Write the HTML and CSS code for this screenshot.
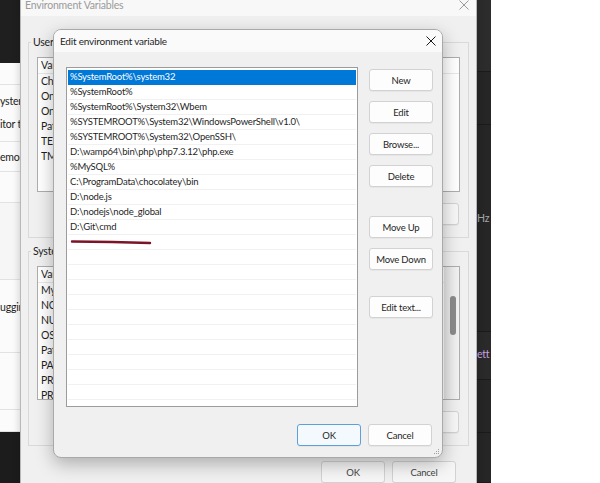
FILE: index.html
```html
<!DOCTYPE html>
<html lang="en">
  <head>
    <meta charset="UTF-8" />
    <title>Edit environment variable</title>
    <link rel="stylesheet" href="styles.css">
  </head>
  <body>
    <div class="desktop">
      <!-- window behind, on the left -->
      <div class="side-window">
        <div class="side-top"></div>
        <div class="side-block side-a"></div>
        <div class="side-block side-b">
          <div class="side-text">ystem</div>
          <div class="side-text side-text-2">itor tools</div>
        </div>
        <div class="side-block side-c"><div class="side-text">emory</div></div>
        <div class="side-block side-d"></div>
        <div class="side-block side-e"></div>
        <div class="side-block side-f"><div class="side-text">ugging</div></div>
        <div class="side-block side-g"></div>
        <div class="side-block side-h"></div>
        <div class="side-bottom"></div>
      </div>

      <!-- dark app strip on the right -->
      <div class="dark-strip">
        <div class="strip-part strip-a"></div>
        <div class="strip-part strip-b"></div>
        <div class="strip-part strip-c"><span class="strip-text">Hz</span></div>
        <div class="strip-part strip-d"><span class="strip-text strip-accent">ett</span></div>
        <div class="strip-part strip-e"></div>
        <div class="strip-part strip-f"></div>
      </div>

      <!-- Environment Variables (inactive) -->
      <div class="env-window">
        <div class="env-title">
          <span>Environment Variables</span>
          <svg class="close-icon" width="10" height="10" viewBox="0 0 10 10">
            <path d="M0.5 0.5 L9.5 9.5 M9.5 0.5 L0.5 9.5" stroke="#9a9a9a" stroke-width="1" fill="none" />
          </svg>
        </div>
        <div class="env-body">
          <fieldset class="group">
            <legend>User variables for user</legend>
            <div class="var-list var-list-user">
              <div class="var-rows">
                <div class="var-row var-head"><span class="var-name">Variable</span><span>Value</span></div>
                <div class="var-row"><span class="var-name">ChocolateyLastPathUpdate</span><span>133214567890</span></div>
                <div class="var-row"><span class="var-name">OneDrive</span><span>C:\Users\user\OneDrive</span></div>
                <div class="var-row"><span class="var-name">OneDriveConsumer</span><span>C:\Users\user\OneDrive</span></div>
                <div class="var-row"><span class="var-name">Path</span><span>C:\Users\user\AppData\Local</span></div>
                <div class="var-row"><span class="var-name">TEMP</span><span>C:\Users\user\AppData\Local\Temp</span></div>
                <div class="var-row"><span class="var-name">TMP</span><span>C:\Users\user\AppData\Local\Temp</span></div>
              </div>
            </div>
            <div class="env-actions">
              <button class="btn btn-env">New...</button>
              <button class="btn btn-env">Edit...</button>
              <button class="btn btn-env">Delete</button>
            </div>
          </fieldset>

          <fieldset class="group group-system">
            <legend>System variables</legend>
            <div class="var-list var-list-system">
              <div class="var-rows">
                <div class="var-row var-head"><span class="var-name">Variable</span><span>Value</span></div>
                <div class="var-row"><span class="var-name">MySQL</span><span>D:\wamp64\bin\mysql\bin</span></div>
                <div class="var-row"><span class="var-name">NODE_PATH</span><span>D:\nodejs\node_global</span></div>
                <div class="var-row"><span class="var-name">NUMBER_OF_PROCESSORS</span><span>8</span></div>
                <div class="var-row"><span class="var-name">OS</span><span>Windows_NT</span></div>
                <div class="var-row"><span class="var-name">Path</span><span>C:\Windows\system32</span></div>
                <div class="var-row"><span class="var-name">PATHEXT</span><span>.COM;.EXE;.BAT;.CMD</span></div>
                <div class="var-row"><span class="var-name">PROCESSOR_ARCHITECTURE</span><span>AMD64</span></div>
                <div class="var-row"><span class="var-name">PROCESSOR_IDENTIFIER</span><span>Intel64 Family 6</span></div>
              </div>
              <div class="scroll-track"><div class="scroll-thumb"></div></div>
            </div>
            <div class="env-actions">
              <button class="btn btn-env">New...</button>
              <button class="btn btn-env">Edit...</button>
              <button class="btn btn-env">Delete</button>
            </div>
          </fieldset>

          <div class="env-footer">
            <button class="btn btn-env-small">OK</button>
            <button class="btn btn-env-small">Cancel</button>
          </div>
        </div>
      </div>

      <!-- Edit environment variable (active dialog) -->
      <div class="edit-dialog">
        <div class="dialog-title">
          <span>Edit environment variable</span>
          <svg class="close-icon" width="10" height="10" viewBox="0 0 10 10">
            <path d="M0.5 0.5 L9.5 9.5 M9.5 0.5 L0.5 9.5" stroke="#1a1a1a" stroke-width="1" fill="none" />
          </svg>
        </div>
        <div class="dialog-body">
          <div class="path-list">
            <div class="path-row selected">%SystemRoot%\system32</div>
            <div class="path-row">%SystemRoot%</div>
            <div class="path-row">%SystemRoot%\System32\Wbem</div>
            <div class="path-row">%SYSTEMROOT%\System32\WindowsPowerShell\v1.0\</div>
            <div class="path-row">%SYSTEMROOT%\System32\OpenSSH\</div>
            <div class="path-row">D:\wamp64\bin\php\php7.3.12\php.exe</div>
            <div class="path-row">%MySQL%</div>
            <div class="path-row">C:\ProgramData\chocolatey\bin</div>
            <div class="path-row">D:\node.js</div>
            <div class="path-row">D:\nodejs\node_global</div>
            <div class="path-row">D:\Git\cmd</div>
            <div class="path-row"></div>
            <div class="path-row"></div>
            <div class="path-row"></div>
            <div class="path-row"></div>
            <div class="path-row"></div>
            <div class="path-row"></div>
            <div class="path-row"></div>
            <div class="path-row"></div>
            <div class="path-row"></div>
            <div class="path-row"></div>
            <div class="path-row"></div>
            <div class="path-row"></div>
          </div>
          <div class="dialog-buttons">
            <button class="btn">New</button>
            <button class="btn">Edit</button>
            <button class="btn">Browse...</button>
            <button class="btn">Delete</button>
            <button class="btn btn-gap-lg">Move Up</button>
            <button class="btn">Move Down</button>
            <button class="btn btn-gap">Edit text...</button>
          </div>
        </div>
        <div class="dialog-footer">
          <button class="btn btn-default">OK</button>
          <button class="btn">Cancel</button>
        </div>
        <svg class="grip" width="6" height="6" viewBox="0 0 6 6">
          <rect x="4" y="0" width="1" height="1" fill="#a0a0a0" />
          <rect x="2" y="2" width="1" height="1" fill="#a0a0a0" />
          <rect x="4" y="2" width="1" height="1" fill="#a0a0a0" />
          <rect x="0" y="4" width="1" height="1" fill="#a0a0a0" />
          <rect x="2" y="4" width="1" height="1" fill="#a0a0a0" />
          <rect x="4" y="4" width="1" height="1" fill="#a0a0a0" />
        </svg>
      </div>

      <!-- hand-drawn red underline -->
      <svg class="annotation" width="600" height="483" viewBox="0 0 600 483">
        <path d="M72 241.5 L112 242 L150 243" stroke="#7c1427" stroke-width="2.4" stroke-linecap="round" fill="none" />
      </svg>
    </div>
  </body>
</html>
```

FILE: styles.css
```css
body {
  margin: 0;
  width: 600px;
  height: 483px;
  overflow: hidden;
  background-color: #ffffff;
  font-family: Lato, "Noto Sans", sans-serif;
  font-size: 9.5px;
  letter-spacing: -0.2px;
  color: #1f1f1f;
}
.desktop {
  position: relative;
  width: 600px;
  height: 483px;
  overflow: hidden;
}

/* left background window */
.side-window {
  position: absolute;
  left: 0;
  top: 0;
  width: 60px;
  height: 483px;
  display: flex;
  flex-direction: column;
  background-color: #fbfbfb;
}
.side-top {
  flex: none;
  height: 63px;
  background-color: #1f1f1f;
}
.side-block {
  flex: none;
  box-sizing: border-box;
  border-bottom: 1px solid #e2e2e2;
  overflow: hidden;
  white-space: nowrap;
}
.side-a { height: 22px; }
.side-b { height: 57px; padding-top: 8px; }
.side-c { height: 30px; padding-top: 7px; }
.side-d { height: 31px; }
.side-e { height: 77px; background-color: #f6f6f6; }
.side-f { height: 73px; padding-top: 19px; }
.side-g { height: 57px; }
.side-h { height: 22px; }
.side-text {
  line-height: 16px;
  font-size: 10.5px;
  color: #222222;
}
.side-text-2 {
  margin-top: 7px;
}
.side-bottom {
  flex: 1;
  background-color: #1c1c1c;
}

/* right dark strip */
.dark-strip {
  position: absolute;
  left: 477px;
  top: 0;
  width: 14px;
  height: 483px;
  display: flex;
  flex-direction: column;
  overflow: hidden;
  background-color: #262626;
}
.strip-part {
  flex: none;
  box-sizing: border-box;
  border-bottom: 1px solid #1b1b1b;
  white-space: nowrap;
}
.strip-a { height: 72px; background-color: #2c2c2c; }
.strip-b { height: 53px; }
.strip-c { height: 207px; padding-top: 85px; }
.strip-d { height: 48px; padding-top: 14px; background-color: #2a2a2a; }
.strip-e { height: 53px; }
.strip-f { height: 50px; }
.strip-text {
  display: block;
  line-height: 16px;
  font-size: 10.5px;
  color: #a8a8a8;
}
.strip-accent {
  color: #c9a3e6;
}

/* Environment Variables window */
.env-window {
  position: absolute;
  left: 20px;
  top: -8px;
  width: 457px;
  height: 500px;
  box-sizing: border-box;
  display: flex;
  flex-direction: column;
  background-color: #f0f0f0;
  border: 1px solid #b8b8b8;
  box-shadow: 0 0 8px rgba(0, 0, 0, 0.2);
}
.env-title {
  flex: none;
  height: 23px;
  display: flex;
  align-items: center;
  justify-content: space-between;
  padding: 0 7px 0 4px;
  background-color: #f8f8f8;
  color: #9a9a9a;
  font-size: 10.5px;
}
.env-body {
  padding: 18px 7px 0;
}
.group {
  margin: 0;
  padding: 7px 8px 12px;
  min-width: 0;
  border: 1px solid #d9d9d9;
}
.group legend {
  margin-left: -6px;
  padding: 0 2px;
  line-height: 16px;
  font-size: 10.5px;
  color: #1f1f1f;
}
.group-system {
  margin-top: 5px;
}
.var-list {
  display: flex;
  box-sizing: border-box;
  overflow: hidden;
  background-color: #ffffff;
  border: 1px solid #adadad;
}
.var-list-user { height: 135px; }
.var-list-system { height: 134px; }
.var-rows {
  flex: 1;
  min-width: 0;
}
.var-row {
  display: flex;
  height: 15px;
  line-height: 15px;
  padding-left: 3px;
  font-size: 10.5px;
  white-space: nowrap;
}
.var-head {
  height: 16px;
  border-bottom: 1px solid #e8e8e8;
  box-sizing: border-box;
}
.var-name {
  width: 150px;
  flex: none;
  overflow: hidden;
}
.scroll-track {
  flex: none;
  width: 15px;
  display: flex;
  justify-content: center;
  background: linear-gradient(90deg, #e4e4e4, #f3f3f3);
}
.scroll-thumb {
  width: 6px;
  height: 39px;
  margin-top: 29px;
  margin-left: 3px;
  border-radius: 3px;
  background-color: #8a8a8a;
}
.env-actions {
  display: flex;
  justify-content: flex-end;
  gap: 8px;
  margin-top: 11px;
  padding-right: 1px;
}
.env-footer {
  display: flex;
  justify-content: flex-end;
  gap: 7px;
  padding: 15px 13px 0;
}

/* buttons */
.btn {
  width: 64px;
  height: 22px;
  box-sizing: border-box;
  padding: 0;
  border: 1px solid #d2d2d2;
  border-radius: 3px;
  background-color: #fdfdfd;
  box-shadow: 0 1px 0 rgba(0, 0, 0, 0.04);
  font-family: inherit;
  font-size: 9.5px;
  letter-spacing: -0.2px;
  color: #1f1f1f;
}
.btn-env {
  width: 75px;
  background-color: #f7f7f7;
  color: #444444;
}
.btn-env-small {
  background-color: #f6f6f6;
  color: #444444;
}
.btn-default {
  border-color: #5d9fd8;
  background-color: #f4f9fd;
}
.btn-gap-lg {
  margin-top: 19px;
}
.btn-gap {
  margin-top: 16px;
}

/* Edit environment variable dialog */
.edit-dialog {
  position: absolute;
  left: 53px;
  top: 29px;
  width: 390px;
  height: 429px;
  box-sizing: border-box;
  display: flex;
  flex-direction: column;
  background-color: #f0f0f0;
  border: 1px solid #a9a9a9;
  border-radius: 8px;
  box-shadow: 0 6px 18px rgba(0, 0, 0, 0.28);
}
.dialog-title {
  flex: none;
  height: 22px;
  display: flex;
  align-items: center;
  justify-content: space-between;
  padding: 0 6px;
  border-radius: 7px 7px 0 0;
  background-color: #fafafa;
  font-size: 10px;
}
.close-icon {
  flex: none;
}
.dialog-body {
  display: flex;
  gap: 11px;
  padding: 15px 9px 0 12px;
}
.path-list {
  flex: none;
  width: 292px;
  height: 340px;
  box-sizing: border-box;
  padding: 2px 1px 0;
  overflow: hidden;
  background-color: #ffffff;
  border: 1px solid #9c9c9c;
}
.path-row {
  height: 15px;
  line-height: 14px;
  box-sizing: border-box;
  padding-left: 2px;
  border-bottom: 1px solid #f1f1f1;
  white-space: nowrap;
}
.path-row.selected {
  background-color: #0078d7;
  border-bottom-color: #0078d7;
  color: #ffffff;
}
.dialog-buttons {
  display: flex;
  flex-direction: column;
  gap: 10px;
  padding-top: 2px;
}
.dialog-footer {
  display: flex;
  justify-content: flex-end;
  gap: 7px;
  padding: 17px 10px 11px;
}
.grip {
  position: absolute;
  right: 2px;
  bottom: 2px;
}

/* red marker line drawn over the screenshot */
.annotation {
  position: absolute;
  left: 0;
  top: 0;
  pointer-events: none;
}
```
